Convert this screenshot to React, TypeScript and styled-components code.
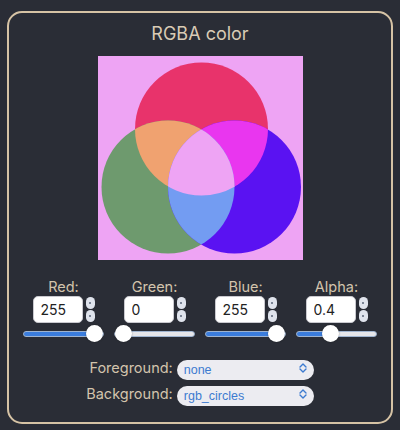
import * as React from "react";
import { useState } from "react";
import styled, { createGlobalStyle } from "styled-components";

const GlobalStyle = createGlobalStyle`
  html, body {
    margin: 0;
    padding: 0;
    background: #2a2d36;
  }
  body {
    font-family: Inter, "Liberation Sans", sans-serif;
  }
`;

const Panel = styled.div`
  box-sizing: border-box;
  margin: 11px 7px 0;
  height: 413px;
  border: 2px solid #d6c3a5;
  border-radius: 15px;
  padding-top: 10px;
  display: flex;
  flex-direction: column;
  align-items: center;
`;

const Title = styled.h1`
  margin: 0;
  font-size: 18px;
  font-weight: 400;
  line-height: 22px;
  color: #d9cbb5;
`;

const Picture = styled.svg`
  display: block;
  margin-top: 11px;
`;

const Controls = styled.div`
  margin-top: 18px;
  display: grid;
  grid-template-columns: repeat(4, 81px);
  column-gap: 10px;
`;

const Channel = styled.div`
  display: flex;
  flex-direction: column;
  align-items: center;
`;

const Label = styled.label`
  font-size: 14.5px;
  line-height: 17px;
  color: #d3c4ad;
`;

const InputRow = styled.div`
  display: flex;
  align-items: center;
  gap: 3px;
  margin-top: 1px;
`;

const NumberBox = styled.input`
  box-sizing: border-box;
  width: 50px;
  height: 27px;
  border: 1px solid #c9c9cf;
  border-radius: 5px;
  background: #fff;
  padding: 0 7px;
  font: 14px Inter, "Liberation Sans", sans-serif;
  color: #222;
  outline: none;
`;

const Stepper = styled.div`
  display: flex;
  flex-direction: column;
  gap: 1px;
`;

const Step = styled.button`
  width: 9px;
  height: 12px;
  padding: 0;
  border: none;
  border-radius: 4.5px;
  background: #dfe3ec;
  display: flex;
  align-items: center;
  justify-content: center;
  cursor: pointer;

  &::after {
    content: "";
    width: 2px;
    height: 2px;
    border-radius: 1px;
    background: #5a6478;
  }
`;

const Range = styled.input`
  -webkit-appearance: none;
  appearance: none;
  width: 81px;
  height: 17px;
  margin: 2px 0 0;
  background: transparent;

  &::-webkit-slider-runnable-track {
    height: 6px;
    border-radius: 3px;
    border: 1px solid #9fb4d0;
    box-sizing: border-box;
    background: var(--fill);
  }
  &::-webkit-slider-thumb {
    -webkit-appearance: none;
    width: 17px;
    height: 17px;
    margin-top: -6.5px;
    border-radius: 50%;
    background: #fff;
    box-shadow: 0 0 2px rgba(0, 0, 0, 0.35);
  }
`;

const Choices = styled.div`
  margin-top: 16px;
  display: grid;
  grid-template-columns: auto 137px;
  column-gap: 4px;
  row-gap: 6px;
  align-items: center;
`;

const ChoiceLabel = styled.label`
  font-size: 14.5px;
  line-height: 18px;
  color: #d3c4ad;
  text-align: right;
`;

const SelectWrap = styled.div`
  position: relative;
  height: 20px;
`;

const Select = styled.select`
  -webkit-appearance: none;
  appearance: none;
  width: 100%;
  height: 20px;
  border: none;
  border-radius: 10px;
  background: #ececf1;
  color: #3d7bd0;
  font: 12.5px "Liberation Sans", Arial, sans-serif;
  padding: 0 20px 0 7px;
  outline: none;
`;

const Chevron = styled.svg`
  position: absolute;
  right: 7px;
  top: 5px;
  pointer-events: none;
`;

type ChannelDef = { key: string; label: string; max: number; step: number };

const channels: ChannelDef[] = [
  { key: "r", label: "Red:", max: 255, step: 1 },
  { key: "g", label: "Green:", max: 255, step: 1 },
  { key: "b", label: "Blue:", max: 255, step: 1 },
  { key: "a", label: "Alpha:", max: 1, step: 0.1 },
];

// region colours of the three circles with the rgba wash laid over them
const tint = {
  bg: "#eea4f4",
  red: "#e8336b",
  green: "#6e9a6e",
  blue: "#5a12f2",
  yellow: "#f0a270",
  magenta: "#e936ef",
  cyan: "#739cf2",
  white: "#eea4f4",
};

const R = { cx: 103.5, cy: 73 };
const G = { cx: 70, cy: 131 };
const B = { cx: 136.5, cy: 131 };
const rad = 66.5;

const Circles = () => (
  <Picture width={205} height={204} viewBox="0 0 205 204">
    <defs>
      <clipPath id="inR">
        <circle cx={R.cx} cy={R.cy} r={rad} />
      </clipPath>
      <clipPath id="inG">
        <circle cx={G.cx} cy={G.cy} r={rad} />
      </clipPath>
      <clipPath id="inRG" clipPath="url(#inR)">
        <circle cx={G.cx} cy={G.cy} r={rad} />
      </clipPath>
    </defs>
    <rect width={205} height={204} fill={tint.bg} />
    <circle cx={R.cx} cy={R.cy} r={rad} fill={tint.red} />
    <circle cx={G.cx} cy={G.cy} r={rad} fill={tint.green} />
    <circle cx={B.cx} cy={B.cy} r={rad} fill={tint.blue} />
    <circle cx={G.cx} cy={G.cy} r={rad} fill={tint.yellow} clipPath="url(#inR)" />
    <circle cx={B.cx} cy={B.cy} r={rad} fill={tint.magenta} clipPath="url(#inR)" />
    <circle cx={B.cx} cy={B.cy} r={rad} fill={tint.cyan} clipPath="url(#inG)" />
    <circle cx={B.cx} cy={B.cy} r={rad} fill={tint.white} clipPath="url(#inRG)" />
  </Picture>
);

const UpDown = () => (
  <Chevron width={8} height={10} viewBox="0 0 8 10">
    <path d="M1 4 L4 1 L7 4 M1 6 L4 9 L7 6" fill="none" stroke="#3d7bd0" strokeWidth={1.4} strokeLinecap="round" strokeLinejoin="round" />
  </Chevron>
);

const App = () => {
  const [values, setValues] = useState<Record<string, number>>({ r: 255, g: 0, b: 255, a: 0.4 });
  const [fg, setFg] = useState("none");
  const [bg, setBg] = useState("rgb_circles");

  const setValue = (key: string, v: number, max: number) => {
    const clamped = Math.min(max, Math.max(0, v));
    setValues({ ...values, [key]: Math.round(clamped * 100) / 100 });
  };

  return (
    <React.Fragment>
      <GlobalStyle />
      <Panel>
        <Title>RGBA color</Title>
        <Circles />
        <Controls>
          {channels.map((c) => {
            const v = values[c.key];
            const pct = (v / c.max) * 100;
            return (
              <Channel key={c.key}>
                <Label>{c.label}</Label>
                <InputRow>
                  <NumberBox
                    value={String(v)}
                    onChange={(e) => setValue(c.key, Number(e.target.value) || 0, c.max)}
                  />
                  <Stepper>
                    <Step onClick={() => setValue(c.key, v + c.step, c.max)} />
                    <Step onClick={() => setValue(c.key, v - c.step, c.max)} />
                  </Stepper>
                </InputRow>
                <Range
                  type="range"
                  min={0}
                  max={c.max}
                  step={c.step}
                  value={v}
                  onChange={(e) => setValue(c.key, Number(e.target.value), c.max)}
                  style={{ ["--fill" as any]: `linear-gradient(to right, #3b7ddd ${pct}%, #e6e6ea ${pct}%)` }}
                />
              </Channel>
            );
          })}
        </Controls>
        <Choices>
          <ChoiceLabel>Foreground:</ChoiceLabel>
          <SelectWrap>
            <Select value={fg} onChange={(e) => setFg(e.target.value)}>
              <option value="none">none</option>
              <option value="rgb_circles">rgb_circles</option>
            </Select>
            <UpDown />
          </SelectWrap>
          <ChoiceLabel>Background:</ChoiceLabel>
          <SelectWrap>
            <Select value={bg} onChange={(e) => setBg(e.target.value)}>
              <option value="none">none</option>
              <option value="rgb_circles">rgb_circles</option>
            </Select>
            <UpDown />
          </SelectWrap>
        </Choices>
      </Panel>
    </React.Fragment>
  );
};

export default App;
